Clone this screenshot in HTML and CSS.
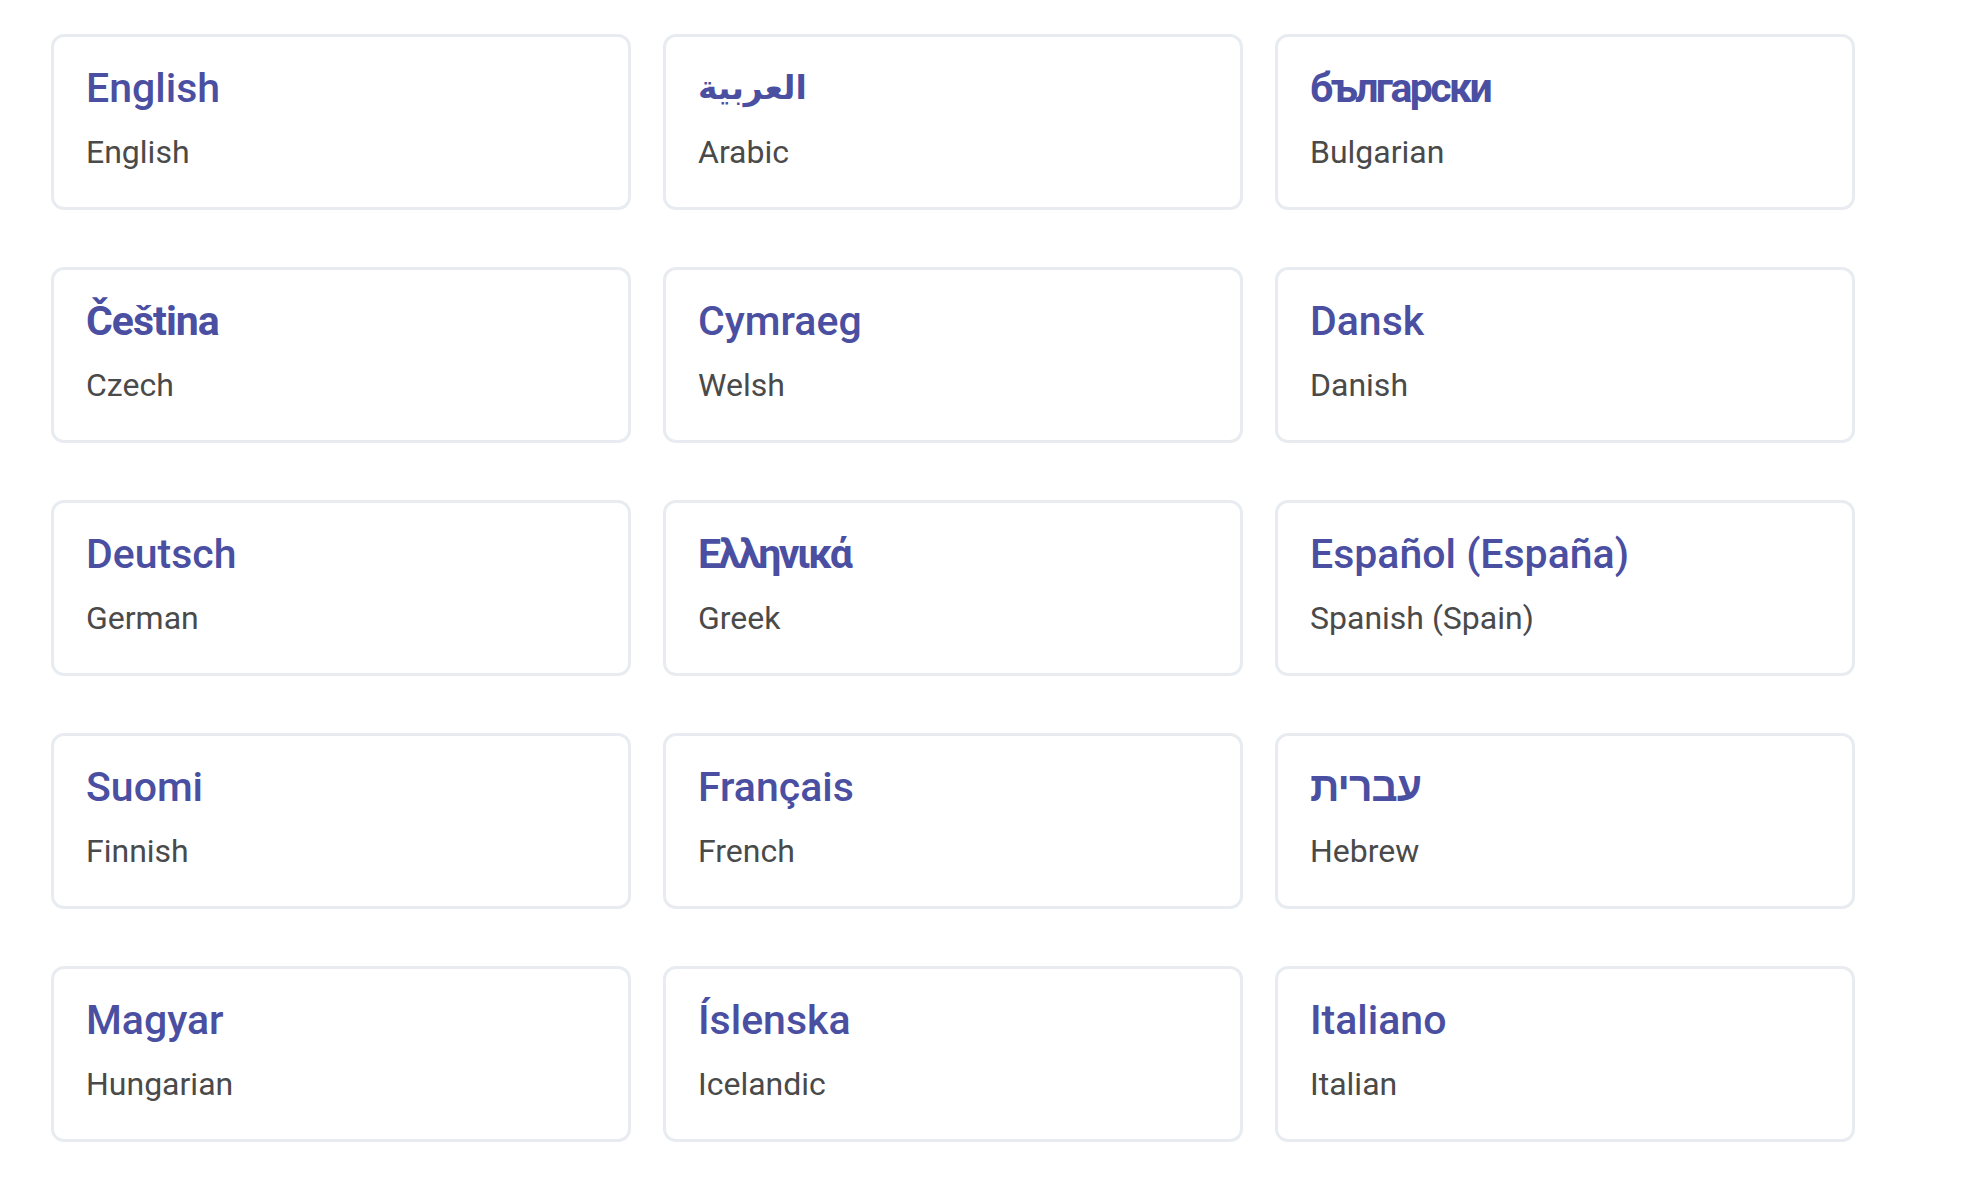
FILE: index.html
```html
<!DOCTYPE html>
<html lang="en">
<head>
<meta charset="utf-8">
<title>Languages</title>
<link rel="stylesheet" href="styles.css">
</head>
<body>
<main class="grid">
  <div class="card"><div class="native">English</div><div class="name">English</div></div>
  <div class="card"><div class="native alt arabic">العربية</div><div class="name">Arabic</div></div>
  <div class="card"><div class="native alt narrow">български</div><div class="name">Bulgarian</div></div>
  <div class="card"><div class="native alt">Čeština</div><div class="name">Czech</div></div>
  <div class="card"><div class="native">Cymraeg</div><div class="name">Welsh</div></div>
  <div class="card"><div class="native">Dansk</div><div class="name">Danish</div></div>
  <div class="card"><div class="native">Deutsch</div><div class="name">German</div></div>
  <div class="card"><div class="native alt narrow">Ελληνικά</div><div class="name">Greek</div></div>
  <div class="card"><div class="native">Español (España)</div><div class="name">Spanish (Spain)</div></div>
  <div class="card"><div class="native">Suomi</div><div class="name">Finnish</div></div>
  <div class="card"><div class="native">Français</div><div class="name">French</div></div>
  <div class="card"><div class="native alt">עברית</div><div class="name">Hebrew</div></div>
  <div class="card"><div class="native">Magyar</div><div class="name">Hungarian</div></div>
  <div class="card"><div class="native">Íslenska</div><div class="name">Icelandic</div></div>
  <div class="card"><div class="native">Italiano</div><div class="name">Italian</div></div>
</main>
</body>
</html>
```
FILE: styles.css
```css
html, body {
  margin: 0;
  padding: 0;
  background: #ffffff;
}

body {
  font-family: Roboto, "Liberation Sans", sans-serif;
}

.grid {
  display: grid;
  grid-template-columns: repeat(3, 580px);
  column-gap: 32px;
  row-gap: 57px;
  padding: 34px 0 0 51px;
}

.card {
  box-sizing: border-box;
  height: 176px;
  border: 3px solid #e8ecf0;
  border-radius: 13px;
  padding: 27px 32px 0 32px;
  background: #ffffff;
}

.native {
  font-size: 41px;
  line-height: 48px;
  font-weight: 500;
  color: #4a4fa2;
  margin-bottom: 21px;
  white-space: nowrap;
}

.native.alt {
  font-weight: 700;
  letter-spacing: -1px;
}

.native.narrow {
  letter-spacing: -2.6px;
}

.native.arabic {
  font-family: "DejaVu Sans", sans-serif;
  font-size: 33px;
  letter-spacing: 0;
}

.name {
  font-size: 32px;
  line-height: 38px;
  font-weight: 400;
  color: #4a4a4a;
}
```
